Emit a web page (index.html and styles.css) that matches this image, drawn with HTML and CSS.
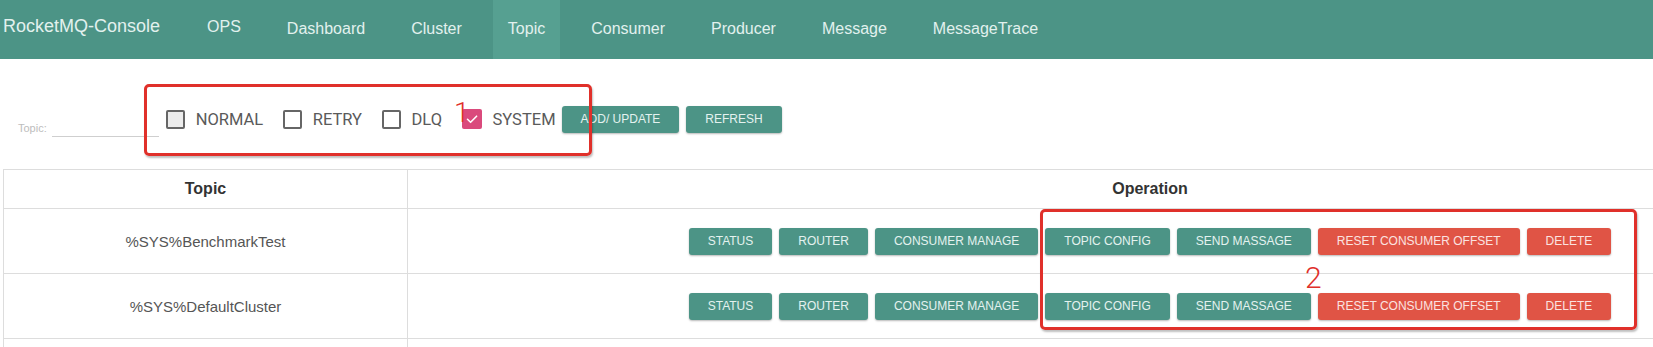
FILE: index.html
```html
<!DOCTYPE html>
<html lang="en">
<head>
<meta charset="utf-8">
<title>RocketMQ-Console</title>
<link rel="stylesheet" href="styles.css">
</head>
<body>
<div class="page">
  <nav class="navbar">
    <div class="brand">RocketMQ-Console</div>
    <ul class="nav-list">
      <li class="nav-item nav-ops">OPS</li>
      <li class="nav-item">Dashboard</li>
      <li class="nav-item">Cluster</li>
      <li class="nav-item active">Topic</li>
      <li class="nav-item">Consumer</li>
      <li class="nav-item">Producer</li>
      <li class="nav-item">Message</li>
      <li class="nav-item">MessageTrace</li>
    </ul>
  </nav>

  <div class="toolbar">
    <div class="topic-field">
      <span class="topic-label">Topic:</span>
      <span class="topic-line"></span>
    </div>
    <div class="checks">
      <label class="check">
        <span class="box box-focus"><span class="halo"></span></span>
        <span class="check-text">NORMAL</span>
      </label>
      <label class="check">
        <span class="box"></span>
        <span class="check-text">RETRY</span>
      </label>
      <label class="check">
        <span class="box"></span>
        <span class="check-text">DLQ</span>
      </label>
      <label class="check">
        <span class="box box-checked">
          <svg viewBox="0 0 20 20" width="20" height="20"><path d="M5.5 10.3 L8.6 13.3 L14.6 7.2" fill="none" stroke="#fff" stroke-width="1.6" stroke-linecap="round" stroke-linejoin="round"/></svg>
        </span>
        <span class="check-text">SYSTEM</span>
      </label>
    </div>
    <div class="tool-buttons">
      <button class="btn">ADD/ UPDATE</button>
      <button class="btn">REFRESH</button>
    </div>
  </div>

  <table class="topic-table">
    <colgroup><col class="col-topic"><col></colgroup>
    <thead>
      <tr><th>Topic</th><th>Operation</th></tr>
    </thead>
    <tbody>
      <tr>
        <td class="topic-name">%SYS%BenchmarkTest</td>
        <td>
          <div class="ops">
            <button class="btn">STATUS</button>
            <button class="btn">ROUTER</button>
            <button class="btn">CONSUMER MANAGE</button>
            <button class="btn">TOPIC CONFIG</button>
            <button class="btn">SEND MASSAGE</button>
            <button class="btn btn-danger">RESET CONSUMER OFFSET</button>
            <button class="btn btn-danger">DELETE</button>
          </div>
        </td>
      </tr>
      <tr>
        <td class="topic-name">%SYS%DefaultCluster</td>
        <td>
          <div class="ops">
            <button class="btn">STATUS</button>
            <button class="btn">ROUTER</button>
            <button class="btn">CONSUMER MANAGE</button>
            <button class="btn">TOPIC CONFIG</button>
            <button class="btn">SEND MASSAGE</button>
            <button class="btn btn-danger">RESET CONSUMER OFFSET</button>
            <button class="btn btn-danger">DELETE</button>
          </div>
        </td>
      </tr>
      <tr class="row-empty">
        <td></td>
        <td></td>
      </tr>
    </tbody>
  </table>

  <div class="mark mark-1"></div>
  <div class="mark-num num-1">1</div>
  <div class="mark mark-2"></div>
  <div class="mark-num num-2">2</div>
</div>
</body>
</html>
```
FILE: styles.css
```css
html, body {
  margin: 0;
  padding: 0;
  overflow: hidden;
  background: #fff;
}
body {
  font-family: "Liberation Sans", Arial, sans-serif;
  color: #333;
}
.page {
  position: relative;
  width: 1653px;
  height: 347px;
  overflow: hidden;
}

/* navbar */
.navbar {
  display: flex;
  align-items: stretch;
  height: 59px;
  background: #4c9486;
  color: #e2f1ee;
}
.brand {
  display: flex;
  align-items: center;
  padding: 0 0 6px 3px;
  margin-right: 32px;
  font-size: 18px;
}
.nav-list {
  display: flex;
  gap: 16px;
  margin: 0;
  padding: 0;
  list-style: none;
}
.nav-item {
  display: flex;
  align-items: center;
  padding: 0 15px 2px;
  font-size: 16px;
}
.nav-ops {
  padding-bottom: 6px;
}
.nav-item.active {
  background: #56a091;
}

/* toolbar */
.toolbar {
  box-sizing: border-box;
  height: 110px;
  padding-top: 10px;
  display: flex;
  align-items: center;
}
.topic-field {
  display: flex;
  align-items: flex-end;
  height: 38px;
  margin-left: 18px;
}
.topic-label {
  font-size: 11px;
  line-height: 13px;
  padding-bottom: 3px;
  color: #bdbdbd;
}
.topic-line {
  width: 107px;
  margin-left: 5px;
  margin-bottom: 1px;
  border-bottom: 1px solid #cfcfcf;
}
.checks {
  display: flex;
  align-items: center;
  gap: 19.5px;
  margin-left: 7px;
}
.check {
  display: flex;
  align-items: center;
  font-family: Roboto, "Liberation Sans", sans-serif;
  font-size: 16.5px;
  color: #5a5a5a;
}
.box {
  position: relative;
  box-sizing: border-box;
  width: 19px;
  height: 19px;
  border: 2px solid #666;
  border-radius: 2px;
  display: flex;
  align-items: center;
  justify-content: center;
}
.box-focus {
  background: #ececec;
}
.halo {
  position: absolute;
  left: 50%;
  top: 50%;
  width: 30px;
  height: 30px;
  margin: -15px 0 0 -15px;
  border-radius: 50%;
  background: #ececec;
  z-index: -1;
}
.box-checked {
  width: 20px;
  height: 20px;
  border: none;
  background: #da4a7c;
}
.box-checked svg {
  display: block;
}
.check-text {
  margin-left: 11px;
}
.tool-buttons {
  display: flex;
  gap: 7px;
  margin-left: 6px;
}

/* buttons */
.btn {
  height: 27px;
  padding: 0 19px;
  border: none;
  border-radius: 3px;
  background: #4c9486;
  color: #e4f2ef;
  font-family: "Liberation Sans", Arial, sans-serif;
  font-size: 12px;
  box-shadow: 0 1px 2px rgba(0, 0, 0, 0.28);
  white-space: nowrap;
  cursor: pointer;
}
.btn-danger {
  background: #e05445;
  color: #fbe3e0;
}

/* table */
.topic-table {
  margin-left: 3px;
  width: 1890px;
  border-collapse: collapse;
  table-layout: fixed;
}
.col-topic {
  width: 404px;
}
.topic-table th,
.topic-table td {
  border: 1px solid #dddddd;
  text-align: center;
  vertical-align: middle;
  padding: 0;
}
.topic-table th {
  height: 38px;
  font-size: 16px;
  font-weight: bold;
  color: #333;
}
.topic-table td {
  height: 64px;
}
.topic-name {
  font-size: 15px;
  color: #555;
}
.ops {
  display: flex;
  justify-content: center;
  gap: 7px;
}

/* annotations */
.mark {
  position: absolute;
  box-sizing: border-box;
  border: 3px solid #e0302a;
  border-radius: 5px;
  box-shadow: 1px 2px 2px rgba(0, 0, 0, 0.25);
}
.mark-1 {
  left: 144px;
  top: 84px;
  width: 448px;
  height: 72px;
}
.mark-2 {
  left: 1040px;
  top: 209px;
  width: 597px;
  height: 121px;
}
.mark-num {
  position: absolute;
  font-family: Roboto, "Liberation Sans", sans-serif;
  font-weight: 300;
  line-height: 1;
  color: #e0302a;
}
.num-1 {
  left: 454px;
  top: 99px;
  font-size: 28px;
}
.num-2 {
  left: 1305px;
  top: 263px;
  font-size: 30px;
}
```
